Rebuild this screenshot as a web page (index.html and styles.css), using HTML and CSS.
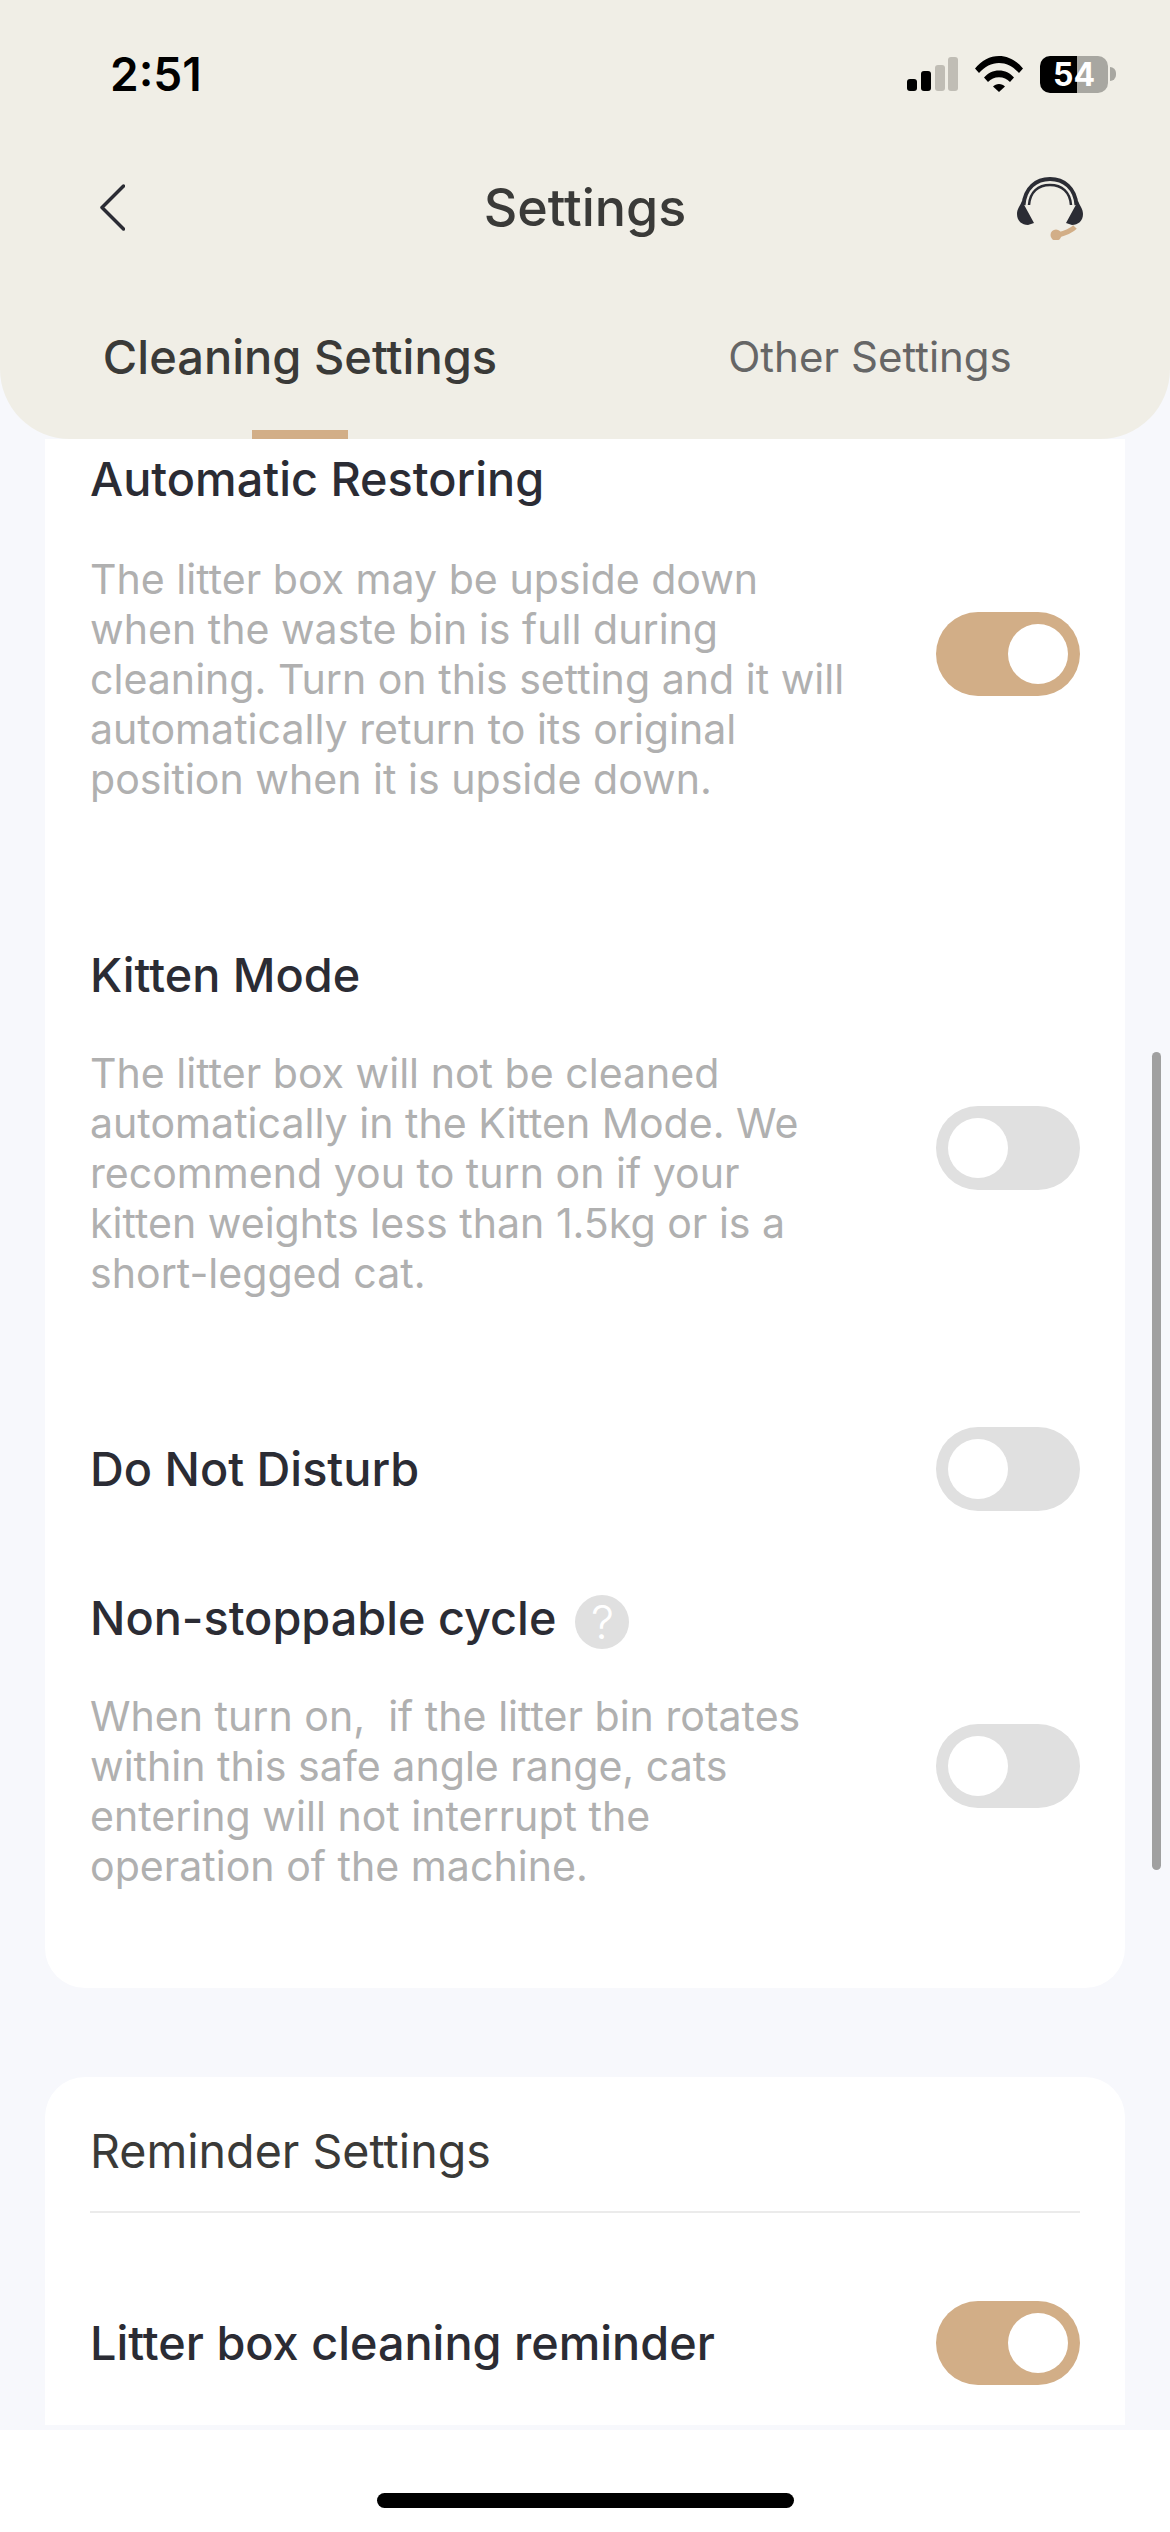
FILE: index.html
```html
<!DOCTYPE html>
<html lang="en">
<head>
    <meta charset="UTF-8">
    <meta name="viewport" content="width=device-width, initial-scale=1.0">
    <title>Settings</title>
    <link rel="stylesheet" href="styles.css">
</head>
<body>
    <div class="screen">
        <header class="top">
            <div class="status">
                <span class="time">2:51</span>
                <div class="status-icons">
                    <svg class="signal" width="51" height="34" viewBox="0 0 51 34">
                        <rect x="0" y="22" width="10" height="12" rx="3" fill="#000"/>
                        <rect x="14" y="14" width="10" height="20" rx="3" fill="#000"/>
                        <rect x="28" y="8" width="10" height="26" rx="3" fill="#c0bdb5"/>
                        <rect x="41" y="0" width="10" height="34" rx="3" fill="#c0bdb5"/>
                    </svg>
                    <svg class="wifi" width="48" height="36" viewBox="0 0 48 36">
                        <path d="M0 12.500C6.500 4.500 15 0 24 0s17.500 4.500 24 12.500l-4 4.500C38 10.500 31.500 7 24 7S10 10.500 4 17z" fill="#000"/>
                        <path d="M9 21.500C13 17 18 14.500 24 14.500s11 2.500 15 7l-4 4.500c-3-3-6.500-4.800-11-4.800S16 23 13 26z" fill="#000"/>
                        <path d="M18 30.500c1.500-1.600 3.500-2.500 6-2.500s4.500 .9 6 2.500L24 36z" fill="#000"/>
                    </svg>
                    <div class="battery"><span>54</span></div>
                    <div class="battery-nub"></div>
                </div>
            </div>
            <div class="nav">
                <svg class="back" width="25" height="47" viewBox="0 0 25 47">
                    <path d="M23.500 2L2 23.500 23.500 45" fill="none" stroke="#2b2c34" stroke-width="3.500" stroke-linecap="round" stroke-linejoin="round"/>
                </svg>
                <h1 class="nav-title">Settings</h1>
                <svg class="headset" width="66" height="63" viewBox="0 0 66 63">
                    <path d="M6.500 28C8 11 19 2 33 2s25 9 26.500 26" fill="none" stroke="#2b2c34" stroke-width="4"/>
                    <path d="M12 28C13 15 21 8 33 8s20 7 21 20" fill="none" stroke="#2b2c34" stroke-width="2.500"/>
                    <path d="M5 24C3 29 0 32 0 37c0 7 5 11 11 11l6-2z" fill="#2b2c34"/>
                    <path d="M61 24c2 5 5 8 5 13 0 7-5 11-11 11l-6-2z" fill="#2b2c34"/>
                    <path d="M58 50c-4 4-9 6-17 8" fill="none" stroke="#d2ae87" stroke-width="5"/>
                    <circle cx="39" cy="58" r="5.500" fill="#d2ae87"/>
                </svg>
            </div>
            <div class="tabs">
                <div class="tab tab-active"><span>Cleaning Settings</span><i class="tab-line"></i></div>
                <div class="tab"><span>Other Settings</span></div>
            </div>
        </header>

        <main class="scroll">
            <section class="card card-cleaning">
                <div class="setting">
                    <h2 class="name">Automatic Restoring</h2>
                    <div class="detail">
                        <p class="desc">The litter box may be upside down<br>when the waste bin is full during<br>cleaning. Turn on this setting and it will<br>automatically return to its original<br>position when it is upside down.</p>
                        <div class="toggle toggle-on"><i></i></div>
                    </div>
                </div>
                <div class="setting setting-kitten">
                    <h2 class="name">Kitten Mode</h2>
                    <div class="detail">
                        <p class="desc">The litter box will not be cleaned<br>automatically in the Kitten Mode. We<br>recommend you to turn on if your<br>kitten weights less than 1.5kg or is a<br>short-legged cat.</p>
                        <div class="toggle"><i></i></div>
                    </div>
                </div>
                <div class="setting-inline setting-dnd">
                    <h2 class="name">Do Not Disturb</h2>
                    <div class="toggle"><i></i></div>
                </div>
                <div class="setting setting-cycle">
                    <div class="name-row">
                        <h2 class="name">Non-stoppable cycle</h2>
                        <span class="help">?</span>
                    </div>
                    <div class="detail">
                        <p class="desc">When turn on,&nbsp; if the litter bin rotates<br>within this safe angle range, cats<br>entering will not interrupt the<br>operation of the machine.</p>
                        <div class="toggle"><i></i></div>
                    </div>
                </div>
            </section>

            <section class="card card-reminder">
                <h3 class="card-title">Reminder Settings</h3>
                <div class="setting-inline setting-reminder">
                    <h2 class="name">Litter box cleaning reminder</h2>
                    <div class="toggle toggle-on"><i></i></div>
                </div>
            </section>

            <div class="scrollbar"></div>
        </main>

        <footer class="home">
            <div class="home-bar"></div>
        </footer>
    </div>
</body>
</html>
```
FILE: styles.css
```css
* {
    box-sizing: border-box;
}
html, body {
    margin: 0;
    padding: 0;
}
body {
    font-family: Inter, "Liberation Sans", sans-serif;
    background-color: #f7f8fc;
}
h1, h2, h3, p {
    margin: 0;
    font-weight: normal;
}
.screen {
    width: 1170px;
    height: 2532px;
    display: flex;
    flex-direction: column;
    overflow: hidden;
}

/* header */
.top {
    height: 439px;
    flex: none;
    background-color: #f0eee6;
    border-radius: 0 0 70px 70px;
    display: flex;
    flex-direction: column;
}
.status {
    height: 148px;
    padding: 0 54px 0 110px;
    display: flex;
    align-items: center;
    justify-content: space-between;
}
.time {
    font-size: 46px;
    font-weight: 600;
    color: #000;
}
.status-icons {
    display: flex;
    align-items: center;
}
.signal {
    margin-right: 17px;
}
.wifi {
    margin-right: 17px;
}
.battery {
    width: 68px;
    height: 37px;
    border-radius: 10px;
    background: linear-gradient(to right, #000 0, #000 37px, #a8a7a1 37px);
    color: #fff;
    font-size: 32px;
    font-weight: 700;
    line-height: 37px;
    text-align: center;
}
.battery-nub {
    width: 6px;
    height: 14px;
    margin-left: 2px;
    background-color: #a8a7a1;
    border-radius: 0 7px 7px 0;
}
.nav {
    height: 118px;
    padding: 0 87px;
    display: grid;
    grid-template-columns: 1fr auto 1fr;
    align-items: center;
}
.back {
    margin-left: 13px;
}
.nav-title {
    font-size: 52px;
    font-weight: 450;
    color: #3a3a38;
}
.headset {
    margin-top: 3px;
    justify-self: end;
}
.tabs {
    flex: 1;
    padding: 0 15px;
    display: flex;
}
.tab {
    flex: 1;
    padding-top: 64px;
    display: flex;
    flex-direction: column;
    align-items: center;
    justify-content: space-between;
    font-size: 42px;
    line-height: 54px;
    color: #666;
}
.tab-active {
    font-size: 47px;
    font-weight: 450;
    color: #3a3a38;
}
.tab-line {
    width: 96px;
    height: 9px;
    background-color: #d2ae87;
}

/* scrolling content */
.scroll {
    position: relative;
    flex: 1;
    padding: 0 45px;
    overflow: hidden;
}
.card {
    background-color: #fff;
    border-radius: 40px;
    padding: 0 45px;
}
.card-cleaning {
    margin-top: -40px;
    padding-top: 50px;
    height: 1589px;
}
.card-reminder {
    margin-top: 89px;
    height: 348px;
    border-radius: 40px 40px 0 0;
}
.name {
    font-size: 46.800px;
    font-weight: 450;
    line-height: 60px;
    color: #2b2c34;
}
.detail {
    margin-top: 45px;
    padding-bottom: 50px;
    display: flex;
    align-items: center;
    justify-content: space-between;
}
.desc {
    font-size: 41.100px;
    line-height: 50px;
    color: #b0b0b0;
}
.detail .toggle {
    margin-bottom: 50px;
}
.setting-kitten {
    margin-top: 91px;
}
.setting-kitten .detail {
    margin-top: 43px;
}
.setting-inline {
    display: flex;
    align-items: center;
    justify-content: space-between;
}
.setting-dnd {
    margin-top: 79px;
}
.setting-cycle {
    margin-top: 76px;
}
.setting-cycle .detail {
    margin-top: 42px;
}
.name-row {
    display: flex;
    align-items: center;
    gap: 19px;
}
.help {
    width: 54px;
    height: 54px;
    margin-top: 8px;
    border-radius: 50%;
    background-color: #e0e0e0;
    color: #fff;
    font-size: 46px;
    font-weight: 300;
    line-height: 54px;
    text-align: center;
}
.toggle {
    width: 144px;
    height: 84px;
    flex: none;
    padding: 12px;
    border-radius: 42px;
    background-color: #e0e0e0;
    display: flex;
}
.toggle i {
    width: 60px;
    height: 60px;
    border-radius: 50%;
    background-color: #fff;
}
.toggle-on {
    background-color: #d2ae87;
    justify-content: flex-end;
}
.card-title {
    height: 136px;
    padding-top: 44px;
    font-size: 46.600px;
    line-height: 60px;
    color: #3a3a38;
    border-bottom: 2px solid #ebebeb;
}
.setting-reminder {
    margin-top: 88px;
}
.scrollbar {
    position: absolute;
    top: 613px;
    right: 9px;
    width: 9px;
    height: 818px;
    border-radius: 5px;
    background-color: #a0a0a0;
}

/* home indicator */
.home {
    height: 102px;
    flex: none;
    background-color: #fff;
    padding-top: 63px;
    display: flex;
    justify-content: center;
}
.home-bar {
    width: 417px;
    height: 15px;
    border-radius: 8px;
    background-color: #000;
}
```
